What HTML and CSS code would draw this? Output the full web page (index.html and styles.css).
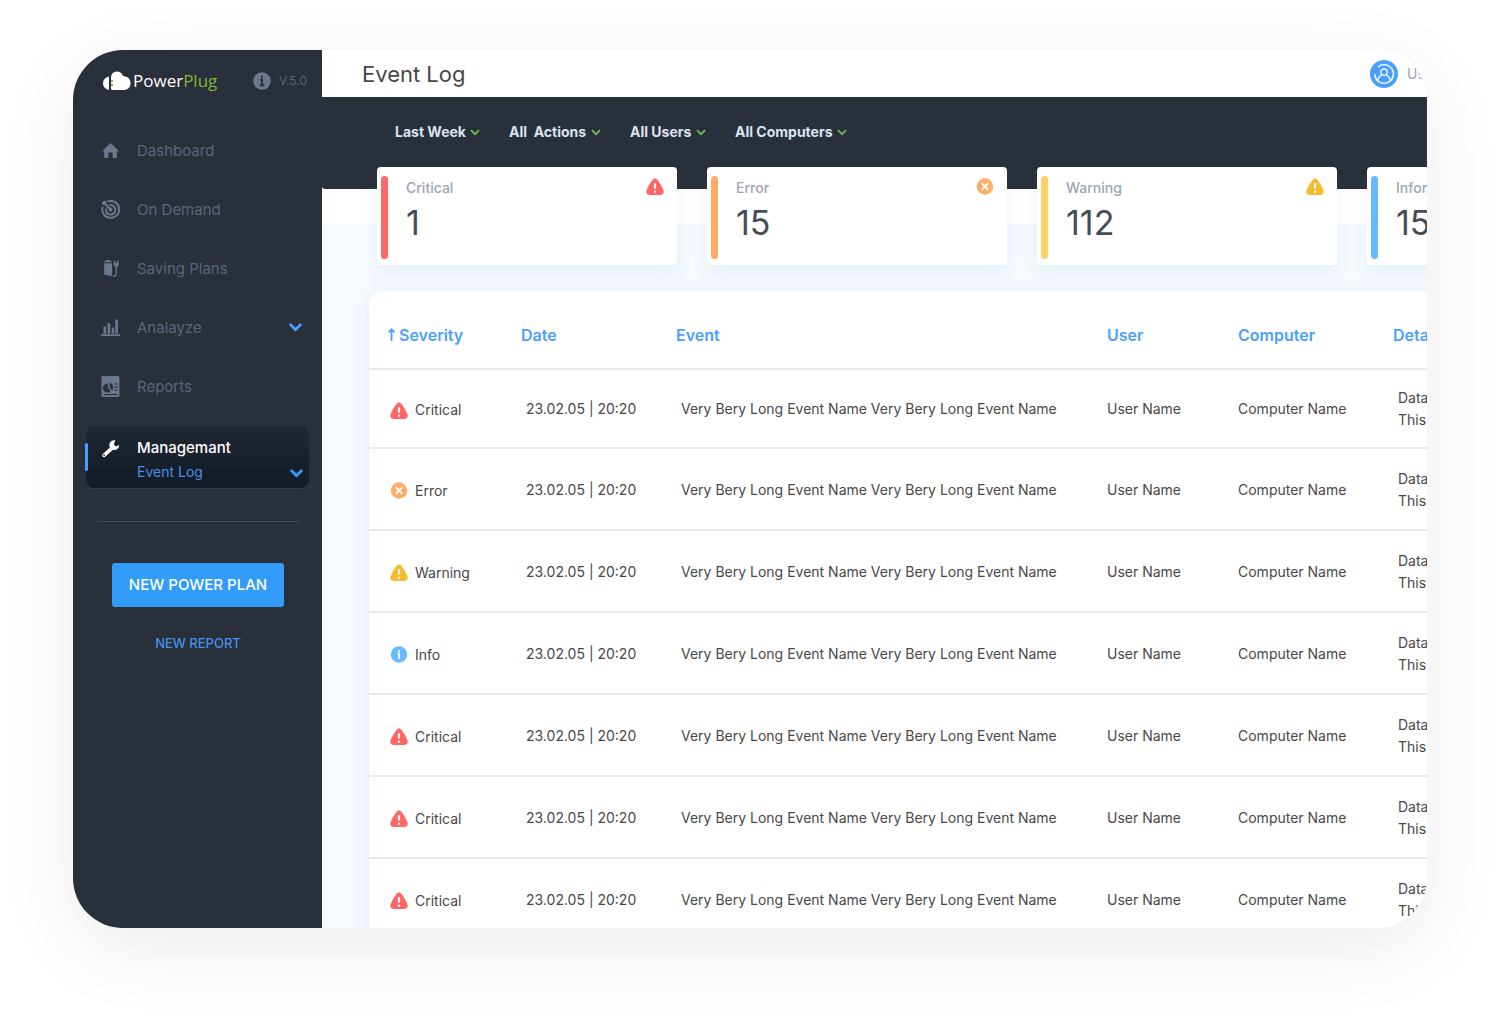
FILE: index.html
```html
<!DOCTYPE html>
<html lang="en">
<head>
<meta charset="utf-8">
<meta name="viewport" content="width=device-width, initial-scale=1">
<title>PowerPlug - Event Log</title>
<link rel="stylesheet" href="styles.css">
</head>
<body>
<svg class="sprite" aria-hidden="true">
  <symbol id="alert" viewBox="0 0 17 16"><path d="M6.2 1.6Q8.5-1.4 10.8 1.6Q14.600 6.400 16.600 11.800Q17.400 15.600 13.800 16H3.200Q-.4 15.600.4 11.800Q2.400 6.400 6.200 1.600Z" fill="currentColor"/><path d="M8.500 5v5M8.500 12v2" stroke="#fff" stroke-width="2" fill="none"/></symbol>
  <symbol id="error" viewBox="0 0 18 18"><circle cx="9" cy="9" r="8.700" fill="currentColor"/><path d="M5.500 5.500l7 7M12.500 5.500l-7 7" stroke="#fff" stroke-width="2"/></symbol>
  <symbol id="info" viewBox="0 0 18 18"><circle cx="9" cy="9" r="8.700" fill="currentColor"/><path d="M9 4.200v2M7.500 8H9v5.500" stroke="#fff" stroke-width="2" fill="none"/></symbol>
  <symbol id="chevron" viewBox="0 0 12 8"><path d="M1.500 1.500L6 6l4.500-4.500" fill="none" stroke="currentColor" stroke-width="2.600" stroke-linecap="round" stroke-linejoin="round"/></symbol>
  <symbol id="caret" viewBox="0 0 10 7"><path d="M1 1.200l4 4 4-4" fill="none" stroke="currentColor" stroke-width="1.700"/></symbol>
</svg>
<div class="app">
  <aside class="sidebar">
    <div class="brand">
      <a class="logo" href="#">
        <svg width="29" height="20" viewBox="0 0 29 20"><path d="M7 5.500A6.800 6.800 0 0 0 7 19Z" fill="#fff"/><path d="M9 6Q9.500.6 15 .4q4.500.2 6.200 4.600Q28.500 5.600 28.600 12q-.2 6.400-6.200 7H10.500Q9 19 9 17.500Z" fill="#fff"/><path d="M9 10h2M9 14h2" stroke="#7cb832" stroke-width="1.800"/></svg>
        <span>Power<b>Plug</b></span>
      </a>
      <span class="version">
        <svg width="18" height="18" viewBox="0 0 18 18"><circle cx="9" cy="9" r="8.800" fill="#6b778d"/><path d="M9 3.800v2.400M7 8h2v5M6.800 13.200h4.400" stroke="#292f3b" stroke-width="2" fill="none"/></svg>
        V.5.0
      </span>
    </div>
    <nav class="nav">
      <a href="#"><svg viewBox="0 0 18 18"><path d="M9 2L.8 9.600H3V16h4v-5h4v5h4V9.600h2.200Z" fill="currentColor"/></svg>Dashboard</a>
      <a href="#"><svg viewBox="0 0 18 18"><g fill="none" stroke="currentColor" stroke-width="1.900"><path d="M6 1.600A8 8 0 1 1 1.600 6.500"/><path d="M8 4.900a4.500 4.500 0 1 1-3.200 3"/><path d="M1.500 1.500L9 9M1 3.500h3V.8" /></g><circle cx="9" cy="9" r="1.800" fill="currentColor"/></svg>On Demand</a>
      <a href="#"><svg viewBox="0 0 18 18"><path d="M4.500 2V1h4v1H10v1H3V2ZM3 4h7.500v11q0 1-1 1L3 15Z" fill="currentColor"/><path d="M11 16q3.500 1 3.500-3V7M13 3.500V1.500M16 3.500V1.500" fill="none" stroke="currentColor" stroke-width="1.300"/><path d="M12 3.500h5v2l-1.500 2h-2L12 5.500Z" fill="currentColor"/></svg>Saving Plans</a>
      <a href="#"><svg viewBox="0 0 18 18"><path d="M0 15.500h18V17H0ZM2.300 8h2.500v7H2.300ZM6.200 5h2.500v10H6.200ZM10.200 9h2.300v6h-2.300ZM13.500 1.500H16V15h-2.500Z" fill="currentColor"/></svg>Analayze<svg class="arrow"><use href="#chevron"/></svg></a>
      <a href="#"><svg class="tall" viewBox="0 0 18 21"><rect width="18" height="21" rx="1.500" fill="currentColor"/><path d="M6 7.500a4.500 4.500 0 1 0 3.200 7.500L6.500 12Z" fill="#292f3b"/><path d="M8 6.800a4.500 4.500 0 0 1 3.500 4.700q0 2-1 3L8 11Z" fill="#292f3b"/><path d="M13 8h3M13 11h3M13 14h3M2.500 18.500H16" stroke="#292f3b" stroke-width="1.200"/></svg>Reports</a>
      <a class="current" href="#" aria-current="page"><svg viewBox="0 0 18 18"><path d="M2.800 15.500L11 8.200" stroke="currentColor" stroke-width="3.400" stroke-linecap="round"/><path d="M13.500 1.200a4.700 4.700 0 1 0 3.800 4.600l-3 1.400-2.200-2.100Z" fill="currentColor"/><circle cx="2.900" cy="15.300" r=".8" fill="#292f3b"/></svg><span class="pair">Managemant<small>Event Log</small></span><svg class="arrow"><use href="#chevron"/></svg></a>
    </nav>
    <hr class="rule">
    <button class="primary" type="button">NEW POWER PLAN</button>
    <button class="plain" type="button">NEW REPORT</button>
  </aside>

  <main class="main">
    <header class="topbar">
      <h1>Event Log</h1>
      <button class="user" type="button">
        <svg width="28" height="28" viewBox="0 0 28 28"><circle cx="14" cy="14" r="14" fill="#4b9fff"/><g fill="none" stroke="#fff" stroke-width="1.300"><path d="M8 7A9.300 9.300 0 1 1 5 16v-2"/><circle cx="14" cy="12" r="3.200"/><path d="M7.800 20.500v-1q1-3.500 4.200-4.500M20.200 20.500v-1q-1-3.500-4.200-4.500"/></g></svg>
        User
      </button>
    </header>
    <form class="filters">
      <label><select aria-label="Period"><option>Last Week</option></select><svg><use href="#caret"/></svg></label>
      <label><select aria-label="Actions"><option>All&nbsp; Actions</option></select><svg><use href="#caret"/></svg></label>
      <label><select aria-label="Users"><option>All Users</option></select><svg><use href="#caret"/></svg></label>
      <label><select aria-label="Computers"><option>All Computers</option></select><svg><use href="#caret"/></svg></label>
    </form>
    <div class="content">
      <section class="cards">
        <article class="card critical"><div><h2>Critical</h2><p>1</p></div><svg class="icon"><use href="#alert"/></svg></article>
        <article class="card error"><div><h2>Error</h2><p>15</p></div><svg class="icon"><use href="#error"/></svg></article>
        <article class="card warning"><div><h2>Warning</h2><p>112</p></div><svg class="icon"><use href="#alert"/></svg></article>
        <article class="card info"><div><h2>Information</h2><p>15</p></div><svg class="icon"><use href="#info"/></svg></article>
      </section>
      <table class="log">
        <colgroup><col class="c-severity"><col class="c-date"><col class="c-event"><col class="c-user"><col class="c-computer"><col class="c-details"></colgroup>
        <thead>
          <tr><th><button type="button"><svg width="7" height="13" viewBox="0 0 7 13"><path d="M3.500 13V2M.6 4.400l2.900-3 2.900 3" fill="none" stroke="currentColor" stroke-width="1.800"/></svg>Severity</button></th><th>Date</th><th>Event</th><th class="near">User</th><th class="near">Computer</th><th>Details</th></tr>
        </thead>
        <tbody>
          <tr><td><span class="level"><svg class="icon critical"><use href="#alert"/></svg>Critical</span></td><td>23.02.05 | 20:20</td><td>Very Bery Long Event Name Very Bery Long Event Name</td><td class="near">User Name</td><td class="near">Computer Name</td><td>Data<br>This</td></tr>
          <tr><td><span class="level"><svg class="icon error"><use href="#error"/></svg>Error</span></td><td>23.02.05 | 20:20</td><td>Very Bery Long Event Name Very Bery Long Event Name</td><td class="near">User Name</td><td class="near">Computer Name</td><td>Data<br>This</td></tr>
          <tr><td><span class="level"><svg class="icon warning"><use href="#alert"/></svg>Warning</span></td><td>23.02.05 | 20:20</td><td>Very Bery Long Event Name Very Bery Long Event Name</td><td class="near">User Name</td><td class="near">Computer Name</td><td>Data<br>This</td></tr>
          <tr><td><span class="level"><svg class="icon info"><use href="#info"/></svg>Info</span></td><td>23.02.05 | 20:20</td><td>Very Bery Long Event Name Very Bery Long Event Name</td><td class="near">User Name</td><td class="near">Computer Name</td><td>Data<br>This</td></tr>
          <tr><td><span class="level"><svg class="icon critical"><use href="#alert"/></svg>Critical</span></td><td>23.02.05 | 20:20</td><td>Very Bery Long Event Name Very Bery Long Event Name</td><td class="near">User Name</td><td class="near">Computer Name</td><td>Data<br>This</td></tr>
          <tr><td><span class="level"><svg class="icon critical"><use href="#alert"/></svg>Critical</span></td><td>23.02.05 | 20:20</td><td>Very Bery Long Event Name Very Bery Long Event Name</td><td class="near">User Name</td><td class="near">Computer Name</td><td>Data<br>This</td></tr>
          <tr><td><span class="level"><svg class="icon critical"><use href="#alert"/></svg>Critical</span></td><td>23.02.05 | 20:20</td><td>Very Bery Long Event Name Very Bery Long Event Name</td><td class="near">User Name</td><td class="near">Computer Name</td><td>Data<br>This</td></tr>
        </tbody>
      </table>
    </div>
  </main>
</div>
</body>
</html>
```
FILE: styles.css
```css
* { box-sizing: border-box; }

body {
  margin: 0;
  height: 100vh;
  padding: 50px 73px 99px;
  background: #fff;
  color: #484848;
  font: 14px/22px Inter, "Liberation Sans", sans-serif;
  overflow: hidden;
}

button, select { font: inherit; color: inherit; border: 0; padding: 0; background: none; cursor: pointer; }
h1, h2, p { margin: 0; }
a { color: inherit; text-decoration: none; }
svg { flex: none; }
.sprite { display: none; }

.app {
  display: flex;
  height: 100%;
  border-radius: 50px;
  overflow: hidden;
  box-shadow: 0 20px 80px rgba(0, 0, 0, .08);
}

/* Sidebar */
.sidebar {
  flex: 0 0 249px;
  display: flex;
  flex-direction: column;
  background: #292f3b;
  color: #5b667a;
}
.brand {
  display: flex;
  align-items: center;
  justify-content: space-between;
  height: 71px;
  padding: 0 15px 9px 29px;
}
.logo { display: flex; align-items: center; gap: 2px; color: #fff; font: 17px/24px "Open Sans", sans-serif; }
.logo b { font-weight: 400; color: #7cb832; }
.version { display: flex; align-items: center; gap: 8px; font-size: 12px; }

.nav a {
  display: flex;
  align-items: center;
  gap: 17px;
  height: 59px;
  padding: 0 20px 0 28px;
  font-size: 15px;
  font-weight: 400;
}
.nav svg { width: 19px; height: 19px; color: #6b778d; }
.nav svg.tall { height: 21px; }
.nav svg.arrow { width: 13px; height: 9px; margin-left: auto; color: #4b9fff; }
.nav a.current {
  position: relative;
  align-items: flex-start;
  height: 62px;
  margin: 10px 13px 0;
  padding: 11px 6px 0 15px;
  border-radius: 8px;
  background: linear-gradient(#202733, #121b27);
  box-shadow: 0 1px 1px rgba(70, 120, 150, .3);
  color: #fff;
  font-weight: 500;
}
.current::before {
  content: "";
  position: absolute;
  left: -1px;
  top: 17px;
  width: 3px;
  height: 28px;
  border-radius: 2px;
  background: #4b9fff;
}
.nav .current svg { color: #fff; margin-top: 2px; }
.nav .current svg.arrow { color: #319cf8; margin-top: 32px; }
.pair { display: flex; flex-direction: column; }
.pair small { font-size: 14px; line-height: 26px; color: #4592e6; font-weight: 400; }

.rule { width: 202px; margin: 33px 0 41px 24px; border: 0; border-top: 1px solid #454b57; }
.primary {
  width: 172px;
  height: 44px;
  margin: 0 0 25px 39px;
  border-radius: 3px;
  background: #329cf8;
  color: #fff;
  font-size: 15px;
  font-weight: 500;
}
.plain { width: 172px; margin-left: 39px; color: #4592e6; font-size: 13px; font-weight: 500; }

/* Main column */
.main { flex: 1; min-width: 0; display: flex; flex-direction: column; background: #fff; overflow: hidden; }
.topbar { flex: 0 0 47px; display: flex; align-items: center; justify-content: space-between; padding-left: 40px; }
.topbar h1 { font-size: 22px; font-weight: 400; }
.user { flex: 0 0 57px; min-width: 0; display: flex; align-items: center; gap: 9px; color: #9aa3b2; white-space: nowrap; }

.filters {
  flex: 0 0 92px;
  display: flex;
  gap: 29px;
  padding: 24px 0 0 73px;
  border-radius: 0 0 0 3px;
  background: #292f3b;
  color: #dbe3f0;
  font-weight: 700;
}
.filters label { display: flex; align-items: center; gap: 4px; height: 22px; }
.filters select { appearance: none; }
.filters svg { width: 10px; height: 7px; color: #6cc04f; }

.content {
  flex: 1;
  min-height: 0;
  background: linear-gradient(#fff 35px, #f5faff 35px);
}

/* Summary cards */
.cards { display: flex; gap: 30px; margin-top: -22px; padding-left: 55px; }
.card {
  flex: 0 0 300px;
  display: flex;
  height: 98px;
  padding: 9px 13px 6px 4px;
  border-radius: 4px;
  background: #fff;
  box-shadow: 0 8px 16px rgba(100, 140, 170, .1);
}
.card::before { content: ""; width: 7px; margin-right: 18px; border-radius: 4px; background: currentColor; }
.card div { flex: 1; }
.card h2 { color: #9ca5b3; font-size: 14px; line-height: 24px; font-weight: 500; }
.card p { color: #464c57; font-size: 34px; line-height: 46px; }

.icon { width: 18px; height: 17px; }
.card .icon { margin-top: 2px; }
.critical { color: #ff6666; }
.error { color: #ffad66; }
.warning { color: #ffd166; }
.icon.warning, .warning .icon { color: #f5bd2c; }
.info { color: #66bbff; }

/* Event table */
.log {
  table-layout: fixed;
  width: 1217px;
  margin: 26px 0 0 47px;
  border-spacing: 0;
  border-radius: 14px 0 0 0;
  background: #fff;
  box-shadow: 0 4px 16px rgba(100, 140, 170, .16);
}
.c-severity { width: 152px; }
.c-date { width: 155px; }
.c-event { width: 428px; }
.c-user { width: 131px; }
.c-computer { width: 158px; }
.log th, .log td { border-bottom: 2px solid #e9eaeb; text-align: left; white-space: nowrap; }
.log th { height: 79px; padding: 10px 0 0; color: #4b9fff; font-size: 16px; font-weight: 600; }
.log th button { display: flex; align-items: center; gap: 4px; }
.log td { height: 82px; padding: 1px 0 0 5px; }
.log tbody tr:first-child td { height: 79px; }
.log th:first-child { padding-left: 19px; }
.log td:first-child { padding: 3px 0 0 21px; }
.log .near { padding-left: 3px; }
.level { display: flex; align-items: center; gap: 7px; }
```
